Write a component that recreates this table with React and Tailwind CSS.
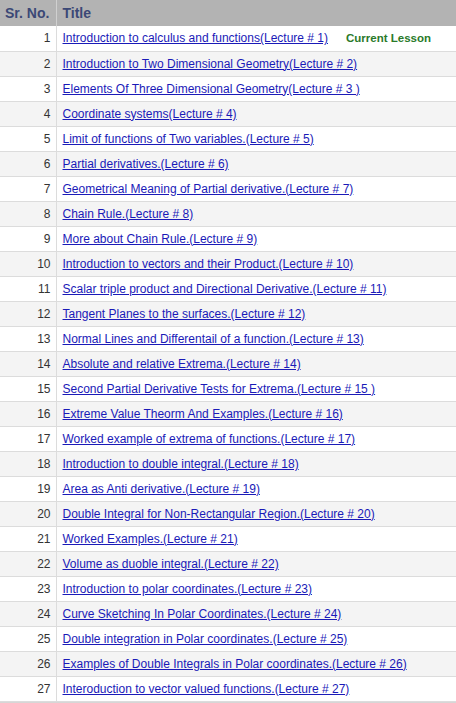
const lessons = [
  'Introduction to calculus and functions(Lecture # 1)',
  'Introduction to Two Dimensional Geometry(Lecture # 2)',
  'Elements Of Three Dimensional Geometry(Lecture # 3 )',
  'Coordinate systems(Lecture # 4)',
  'Limit of functions of Two variables.(Lecture # 5)',
  'Partial derivatives.(Lecture # 6)',
  'Geometrical Meaning of Partial derivative.(Lecture # 7)',
  'Chain Rule.(Lecture # 8)',
  'More about Chain Rule.(Lecture # 9)',
  'Introduction to vectors and their Product.(Lecture # 10)',
  'Scalar triple product and Directional Derivative.(Lecture # 11)',
  'Tangent Planes to the surfaces.(Lecture # 12)',
  'Normal Lines and Differentail of a function.(Lecture # 13)',
  'Absolute and relative Extrema.(Lecture # 14)',
  'Second Partial Derivative Tests for Extrema.(Lecture # 15 )',
  'Extreme Value Theorm And Examples.(Lecture # 16)',
  'Worked example of extrema of functions.(Lecture # 17)',
  'Introduction to double integral.(Lecture # 18)',
  'Area as Anti derivative.(Lecture # 19)',
  'Double Integral for Non-Rectangular Region.(Lecture # 20)',
  'Worked Examples.(Lecture # 21)',
  'Volume as duoble integral.(Lecture # 22)',
  'Introduction to polar coordinates.(Lecture # 23)',
  'Curve Sketching In Polar Coordinates.(Lecture # 24)',
  'Double integration in Polar coordinates.(Lecture # 25)',
  'Examples of Double Integrals in Polar coordinates.(Lecture # 26)',
  'Interoduction to vector valued functions.(Lecture # 27)',
];

export default function App() {
  return (
    <div className="w-[456px] h-[703px] overflow-hidden bg-[#d6d6d6] font-['Liberation_Sans',Arial,sans-serif]">
      <table className="w-full border-collapse">
        <thead>
          <tr className="h-[26px] bg-[#b3b3b3]">
            <th className="w-[56px] border-r border-[#d0d0d0] pl-[5px] text-left text-[14px] font-bold text-[#3b4876]">Sr. No.</th>
            <th className="pl-[6px] text-left text-[14px] font-bold text-[#3b4876]">Title</th>
          </tr>
        </thead>
        <tbody>
          {lessons.map((title, i) => (
            <tr key={i} className={`h-[25px] border-b border-[#dcdcdc] ${i % 2 === 0 ? 'bg-white' : 'bg-[#f4f4f4]'}`}>
              <td className="border-r border-[#dcdcdc] pr-[5px] text-right text-[12px] text-[#333]">{i + 1}</td>
              <td className="pl-[6px] text-[12px]">
                <a href="#" className="text-[#1a1ab8] underline">{title}</a>
                {i === 0 && <span className="ml-[18px] text-[11.5px] font-bold text-[#2a7a2a]">Current Lesson</span>}
              </td>
            </tr>
          ))}
        </tbody>
      </table>
    </div>
  );
}
